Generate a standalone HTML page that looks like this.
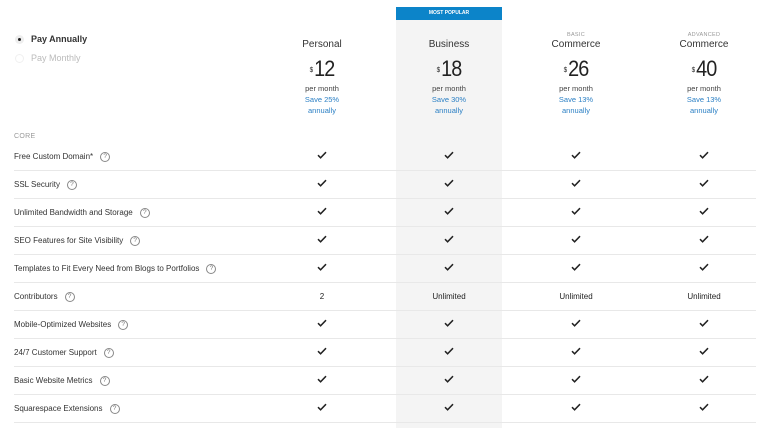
<!DOCTYPE html>
<html><head><meta charset="utf-8"><style>
*{margin:0;padding:0;box-sizing:border-box}
body{width:768px;height:428px;background:#fff;font-family:"Liberation Sans",sans-serif;color:#333;position:relative;overflow:hidden}
.a{position:absolute}
.biz{left:396px;top:20px;width:106px;height:408px;background:#f4f4f4}
.pop{left:396px;top:7px;width:106px;height:13px;background:#0c84c9;color:#fff;font-size:5px;font-weight:bold;text-align:center;line-height:13px}
.col{width:110px;text-align:center}
.sub{font-size:5.5px;color:#999;letter-spacing:.3px}
.name{font-size:10px;color:#333}
.price{font-size:22px;color:#222;line-height:22px;letter-spacing:-1px;transform:scaleX(.9)}
.price sup{font-size:7px;vertical-align:top;position:relative;top:2px;margin-right:2px}
.pm{font-size:7.5px;color:#444;margin-top:4px}
.save{font-size:7.5px;color:#2a7fc4;line-height:11px}
.row{left:14px;width:742px;height:28px;border-bottom:1px solid #e8e8e8}
.lbl{position:absolute;left:0;top:9px;font-size:8px;color:#333}
.q{display:inline-block;width:10px;height:10px;border:1px solid #888;border-radius:50%;font-size:6.5px;text-align:center;line-height:8px;color:#777;margin-left:7px;vertical-align:middle}
.c{position:absolute;top:8px;width:40px;margin-left:-20px;text-align:center;font-size:8px;color:#222;height:11px}
.c svg{display:block;margin:0 auto}
.t{top:9px;width:80px;margin-left:-40px}
</style></head><body>
<svg width="0" height="0" style="position:absolute"><defs><symbol id="k" viewBox="0 0 10 8"><path d="M1 4.2L3.6 6.8L9 1.2" fill="none" stroke="#222" stroke-width="1.5"/></symbol></defs></svg>
<div class="a biz"></div>
<div class="a pop">MOST POPULAR</div>
<div class="a" style="left:15px;top:35px;width:9px;height:9px;border-radius:50%;background:#eee"></div>
<div class="a" style="left:18px;top:38px;width:3px;height:3px;border-radius:50%;background:#222"></div>
<div class="a" style="left:31px;top:34px;font-size:9px;color:#333;font-weight:bold">Pay Annually</div>
<div class="a" style="left:15px;top:54px;width:9px;height:9px;border-radius:50%;border:1px solid #f0f0f0"></div>
<div class="a" style="left:31px;top:53px;font-size:9px;color:#bbb">Pay Monthly</div>

<div class="a col" style="left:267px;top:39px"><div class="name">Personal</div><div class="price" style="margin-top:8px"><sup>$</sup>12</div><div class="pm">per month</div><div class="save" style="margin-top:1px">Save 25%<br>annually</div></div>
<div class="a col" style="left:394px;top:39px"><div class="name">Business</div><div class="price" style="margin-top:8px"><sup>$</sup>18</div><div class="pm">per month</div><div class="save" style="margin-top:1px">Save 30%<br>annually</div></div>
<div class="a col" style="left:521px;top:32px"><div class="sub">BASIC</div><div class="name" style="margin-top:1px">Commerce</div><div class="price" style="margin-top:8px"><sup>$</sup>26</div><div class="pm">per month</div><div class="save" style="margin-top:1px">Save 13%<br>annually</div></div>
<div class="a col" style="left:649px;top:32px"><div class="sub">ADVANCED</div><div class="name" style="margin-top:1px">Commerce</div><div class="price" style="margin-top:8px"><sup>$</sup>40</div><div class="pm">per month</div><div class="save" style="margin-top:1px">Save 13%<br>annually</div></div>

<div class="a" style="left:14px;top:133px;font-size:7px;color:#999;letter-spacing:.3px">CORE</div>

<div class="a row" style="top:143px"><span class="lbl">Free Custom Domain*<span class="q">?</span></span><span class="c" style="left:308px"><svg width="10" height="8"><use href="#k"/></svg></span><span class="c" style="left:435px"><svg width="10" height="8"><use href="#k"/></svg></span><span class="c" style="left:562px"><svg width="10" height="8"><use href="#k"/></svg></span><span class="c" style="left:690px"><svg width="10" height="8"><use href="#k"/></svg></span></div>
<div class="a row" style="top:171px"><span class="lbl">SSL Security<span class="q">?</span></span><span class="c" style="left:308px"><svg width="10" height="8"><use href="#k"/></svg></span><span class="c" style="left:435px"><svg width="10" height="8"><use href="#k"/></svg></span><span class="c" style="left:562px"><svg width="10" height="8"><use href="#k"/></svg></span><span class="c" style="left:690px"><svg width="10" height="8"><use href="#k"/></svg></span></div>
<div class="a row" style="top:199px"><span class="lbl">Unlimited Bandwidth and Storage<span class="q">?</span></span><span class="c" style="left:308px"><svg width="10" height="8"><use href="#k"/></svg></span><span class="c" style="left:435px"><svg width="10" height="8"><use href="#k"/></svg></span><span class="c" style="left:562px"><svg width="10" height="8"><use href="#k"/></svg></span><span class="c" style="left:690px"><svg width="10" height="8"><use href="#k"/></svg></span></div>
<div class="a row" style="top:227px"><span class="lbl">SEO Features for Site Visibility<span class="q">?</span></span><span class="c" style="left:308px"><svg width="10" height="8"><use href="#k"/></svg></span><span class="c" style="left:435px"><svg width="10" height="8"><use href="#k"/></svg></span><span class="c" style="left:562px"><svg width="10" height="8"><use href="#k"/></svg></span><span class="c" style="left:690px"><svg width="10" height="8"><use href="#k"/></svg></span></div>
<div class="a row" style="top:255px"><span class="lbl">Templates to Fit Every Need from Blogs to Portfolios<span class="q">?</span></span><span class="c" style="left:308px"><svg width="10" height="8"><use href="#k"/></svg></span><span class="c" style="left:435px"><svg width="10" height="8"><use href="#k"/></svg></span><span class="c" style="left:562px"><svg width="10" height="8"><use href="#k"/></svg></span><span class="c" style="left:690px"><svg width="10" height="8"><use href="#k"/></svg></span></div>
<div class="a row" style="top:283px"><span class="lbl">Contributors<span class="q">?</span></span><span class="c t" style="left:308px">2</span><span class="c t" style="left:435px">Unlimited</span><span class="c t" style="left:562px">Unlimited</span><span class="c t" style="left:690px">Unlimited</span></div>
<div class="a row" style="top:311px"><span class="lbl">Mobile-Optimized Websites<span class="q">?</span></span><span class="c" style="left:308px"><svg width="10" height="8"><use href="#k"/></svg></span><span class="c" style="left:435px"><svg width="10" height="8"><use href="#k"/></svg></span><span class="c" style="left:562px"><svg width="10" height="8"><use href="#k"/></svg></span><span class="c" style="left:690px"><svg width="10" height="8"><use href="#k"/></svg></span></div>
<div class="a row" style="top:339px"><span class="lbl">24/7 Customer Support<span class="q">?</span></span><span class="c" style="left:308px"><svg width="10" height="8"><use href="#k"/></svg></span><span class="c" style="left:435px"><svg width="10" height="8"><use href="#k"/></svg></span><span class="c" style="left:562px"><svg width="10" height="8"><use href="#k"/></svg></span><span class="c" style="left:690px"><svg width="10" height="8"><use href="#k"/></svg></span></div>
<div class="a row" style="top:367px"><span class="lbl">Basic Website Metrics<span class="q">?</span></span><span class="c" style="left:308px"><svg width="10" height="8"><use href="#k"/></svg></span><span class="c" style="left:435px"><svg width="10" height="8"><use href="#k"/></svg></span><span class="c" style="left:562px"><svg width="10" height="8"><use href="#k"/></svg></span><span class="c" style="left:690px"><svg width="10" height="8"><use href="#k"/></svg></span></div>
<div class="a row" style="top:395px"><span class="lbl">Squarespace Extensions<span class="q">?</span></span><span class="c" style="left:308px"><svg width="10" height="8"><use href="#k"/></svg></span><span class="c" style="left:435px"><svg width="10" height="8"><use href="#k"/></svg></span><span class="c" style="left:562px"><svg width="10" height="8"><use href="#k"/></svg></span><span class="c" style="left:690px"><svg width="10" height="8"><use href="#k"/></svg></span></div>
</body></html>
